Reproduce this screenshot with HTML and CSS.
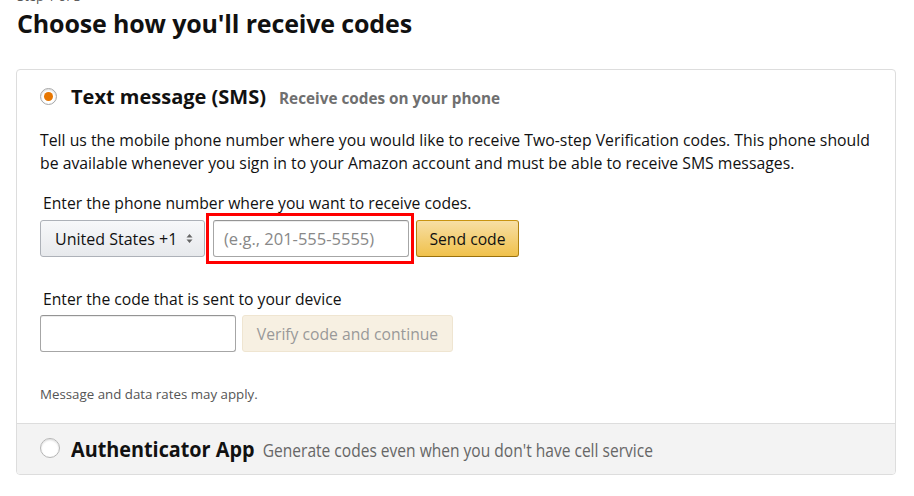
FILE: index.html
```html
<!DOCTYPE html>
<html lang="en">
<head>
    <meta charset="UTF-8">
    <meta name="viewport" content="width=device-width, initial-scale=1.0">
    <title>Two-step Verification</title>
    <link rel="stylesheet" href="styles.css">
</head>
<body>

    <div class="page">
        <div class="step">Step 1 of 3</div>
        <h1>Choose how you'll receive codes</h1>

        <div class="methods">
            <div class="method method-open">
                <div class="method-head">
                    <span class="radio radio-on"></span>
                    <span class="method-title">Text message (SMS)</span>
                    <span class="method-sub">Receive codes on your phone</span>
                </div>

                <p class="intro">Tell us the mobile phone number where you would like to receive Two-step Verification codes. This phone should be available whenever you sign in to your Amazon account and must be able to receive SMS messages.</p>

                <label class="field-label" for="phone">Enter the phone number where you want to receive codes.</label>
                <div class="row">
                    <div class="select">
                        <span>United States +1</span>
                        <span class="arrows">
                            <svg width="7" height="11" viewBox="0 0 7 11"><path d="M0.5 4.5 L3.5 1 L6.5 4.5 Z M0.5 6.5 L3.5 10 L6.5 6.5 Z" fill="#666"/></svg>
                        </span>
                    </div>
                    <div class="highlight">
                        <input type="text" id="phone" class="text-input phone-input" placeholder="(e.g., 201-555-5555)">
                    </div>
                    <button class="btn btn-primary">Send code</button>
                </div>

                <label class="field-label code-label" for="code">Enter the code that is sent to your device</label>
                <div class="row">
                    <input type="text" id="code" class="text-input code-input">
                    <button class="btn btn-disabled" disabled>Verify code and continue</button>
                </div>

                <p class="note">Message and data rates may apply.</p>
            </div>

            <div class="method method-closed">
                <div class="method-head">
                    <span class="radio radio-big"></span>
                    <span class="squeeze">
                        <span class="method-title alt">Authenticator App</span>
                        <span class="alt-sub">Generate codes even when you don't have cell service</span>
                    </span>
                </div>
            </div>
        </div>
    </div>

</body>
</html>
```

FILE: styles.css
```css
body {
    margin: 0;
    font-family: "Open Sans", Arial, sans-serif;
    color: #111;
    background: #fff;
}
.page {
    padding: 0 18px 0 16px;
    margin-top: -12px;
}
.step {
    font-size: 13px;
    color: #555;
    line-height: 17px;
    padding-left: 1px;
}
h1 {
    font-size: 25px;
    font-weight: 700;
    margin: 0 0 28px 1px;
    line-height: 36px;
    letter-spacing: -0.15px;
}
.methods {
    border: 1px solid #ddd;
    border-radius: 4px;
    overflow: hidden;
}
.method-open {
    padding: 13px 22px 20px 23px;
}
.method-closed {
    border-top: 1px solid #ddd;
    background: #f3f3f3;
    padding: 11px 22px 13px 23px;
}
.method-head {
    display: flex;
    align-items: center;
    height: 26px;
    white-space: nowrap;
}
.radio {
    flex-shrink: 0;
    width: 17px;
    height: 17px;
    box-sizing: border-box;
    border: 1px solid #a6a6a6;
    border-radius: 50%;
    background: #fff;
    box-shadow: inset 0 1px 2px rgba(0,0,0,0.15);
    margin-right: 14px;
    display: flex;
    align-items: center;
    justify-content: center;
}
.radio-big {
    width: 20px;
    height: 20px;
    margin-right: 11px;
    border-color: #b5b5b5;
}
.radio-on::after {
    content: "";
    width: 9px;
    height: 9px;
    border-radius: 50%;
    background: #e77600;
}
.method-title {
    font-size: 20px;
    font-weight: 700;
    margin-right: 13px;
}
.method-sub {
    font-size: 15.3px;
    font-weight: 700;
    color: #6f6f6f;
    padding-top: 3px;
}
.squeeze {
    display: inline-block;
    transform: scaleX(0.9);
    transform-origin: left center;
}
.alt {
    font-size: 22px;
    margin-right: 5px;
}
.alt-sub {
    font-size: 17.3px;
    color: #666;
}
.intro {
    font-size: 15.8px;
    line-height: 23px;
    margin: 20px 0 18px 0;
}
.field-label {
    display: block;
    font-size: 15.7px;
    line-height: 20px;
    margin: 0 0 0 3px;
}
.code-label {
    margin-top: 25px;
    margin-bottom: 6px;
}
.row {
    display: flex;
    align-items: center;
}
.select {
    width: 165px;
    height: 37px;
    box-sizing: border-box;
    border: 1px solid #adb1b8;
    border-radius: 3px;
    background: linear-gradient(#f7f8fa, #e7e9ec);
    display: flex;
    align-items: center;
    justify-content: space-between;
    padding: 0 11px 0 14px;
    font-size: 16px;
    color: #111;
}
.arrows {
    display: flex;
}
.highlight {
    border: 3px solid #f00;
    padding: 4px 2px 4px 4px;
    margin-left: 1px;
}
.text-input {
    height: 37px;
    box-sizing: border-box;
    border: 1px solid #a6a6a6;
    border-top-color: #949494;
    border-radius: 3px;
    box-shadow: 0 1px 0 rgba(0,0,0,0.07) inset;
    font-family: inherit;
    font-size: 16.5px;
    padding: 0 10px;
    outline: none;
}
.text-input::placeholder {
    color: #888;
}
.phone-input {
    width: 196px;
    display: block;
}
.code-input {
    width: 196px;
}
.btn {
    height: 37px;
    box-sizing: border-box;
    border-radius: 3px;
    font-family: inherit;
    font-size: 15.7px;
    padding: 0;
}
.btn-primary {
    margin-left: 2px;
    width: 103px;
    border: 1px solid;
    border-color: #c89411 #b0820f #99710d;
    background: linear-gradient(#f7dfa5, #f0c14b);
    color: #111;
}
.btn-disabled {
    margin-left: 6px;
    width: 211px;
    border: 1px solid #efe5d1;
    background: #f7f0e2;
    color: #999;
}
.note {
    font-size: 13.3px;
    line-height: 18px;
    color: #555;
    margin: 33px 0 0 0;
}
```
